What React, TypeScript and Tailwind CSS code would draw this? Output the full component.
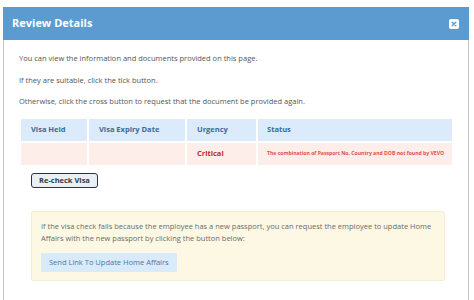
import React from 'react';

const rows = [
  { held: '', expiry: '', urgency: 'Critical', status: 'The combination of Passport No, Country and DOB not found by VEVO' },
];

const App: React.FC = () => {
  return (
    <div className="w-[474px] h-[300px] bg-white overflow-hidden pt-[7px] pl-[3px] pr-[5px]" style={{ fontFamily: '"Open Sans", "Liberation Sans", sans-serif' }}>
      <div className="h-[293px] border-l border-r border-[#c9c9c9] bg-white flex flex-col">
        <div className="h-[33px] bg-[#5b9bd0] flex items-center justify-between pl-[9px] pr-[10px] -mx-px">
          <h2 className="text-white font-bold text-[11px]">Review Details</h2>
          <button className="w-[10px] h-[10px] bg-white rounded-[2px] flex items-center justify-center">
            <svg className="w-[6px] h-[6px] text-[#5b9bd0]" viewBox="0 0 10 10" fill="none" stroke="currentColor" strokeWidth={2.4} strokeLinecap="round">
              <path d="M2 2l6 6M8 2l-6 6" />
            </svg>
          </button>
        </div>

        <div className="px-[15px] pt-[12px] text-[#555] text-[7.5px] leading-[13px] space-y-[8.5px]">
          <p>You can view the information and documents provided on this page.</p>
          <p>If they are suitable, click the tick button.</p>
          <p>Otherwise, click the cross button to request that the document be provided again.</p>
        </div>

        <table className="ml-[15px] mt-[9px] mb-0 w-[435px] border-separate border-spacing-[2px]">
          <thead>
            <tr className="h-[22px] text-left text-[7.5px] font-bold text-[#3a6a9a]">
              <th className="w-[66px] bg-[#dcebfb] pl-[10px] font-bold">Visa Held</th>
              <th className="w-[96px] bg-[#dcebfb] pl-[10px] font-bold">Visa Expiry Date</th>
              <th className="w-[69px] bg-[#dcebfb] pl-[10px] font-bold">Urgency</th>
              <th className="bg-[#dcebfb] pl-[9px] font-bold">Status</th>
            </tr>
          </thead>
          <tbody>
            {rows.map((r, i) => (
              <tr key={i} className="h-[22px] text-left">
                <td className="bg-[#fdeee9]">{r.held}</td>
                <td className="bg-[#fdeee9]">{r.expiry}</td>
                <td className="bg-[#fdeee9] pl-[10px] text-[7.5px] font-bold text-[#c42a2f]">{r.urgency}</td>
                <td className="bg-[#fdeee9] pl-[9px] text-[5.1px] font-bold text-[#d9504f] whitespace-nowrap">{r.status}</td>
              </tr>
            ))}
          </tbody>
        </table>

        <div className="flex pl-[27px] mt-[6px]">
          <button className="h-[15px] px-[7px] border-[1.5px] border-[#2c3440] rounded-[3px] bg-[#eaeff4] text-[7.5px] font-bold text-[#2d3a48] leading-none">
            Re-check Visa
          </button>
        </div>

        <div className="ml-[27px] mr-[23px] mt-[23px] bg-[#fdf8e4] border border-[#f5eed6] rounded-[2px] pl-[9px] pr-[6px] pt-[8px] pb-[8px] flex flex-col items-start">
          <p className="text-[#6b6b6b] text-[7.5px] leading-[12px]">
            If the visa check fails because the employee has a new passport, you can request the employee to update Home Affairs with the new passport by clicking the button below:
          </p>
          <button className="mt-[9px] h-[19px] px-[8px] bg-[#d9eaf9] text-[#4a78a8] text-[7.5px] rounded-[1px]">
            Send Link To Update Home Affairs
          </button>
        </div>
      </div>
    </div>
  );
};

export default App;
